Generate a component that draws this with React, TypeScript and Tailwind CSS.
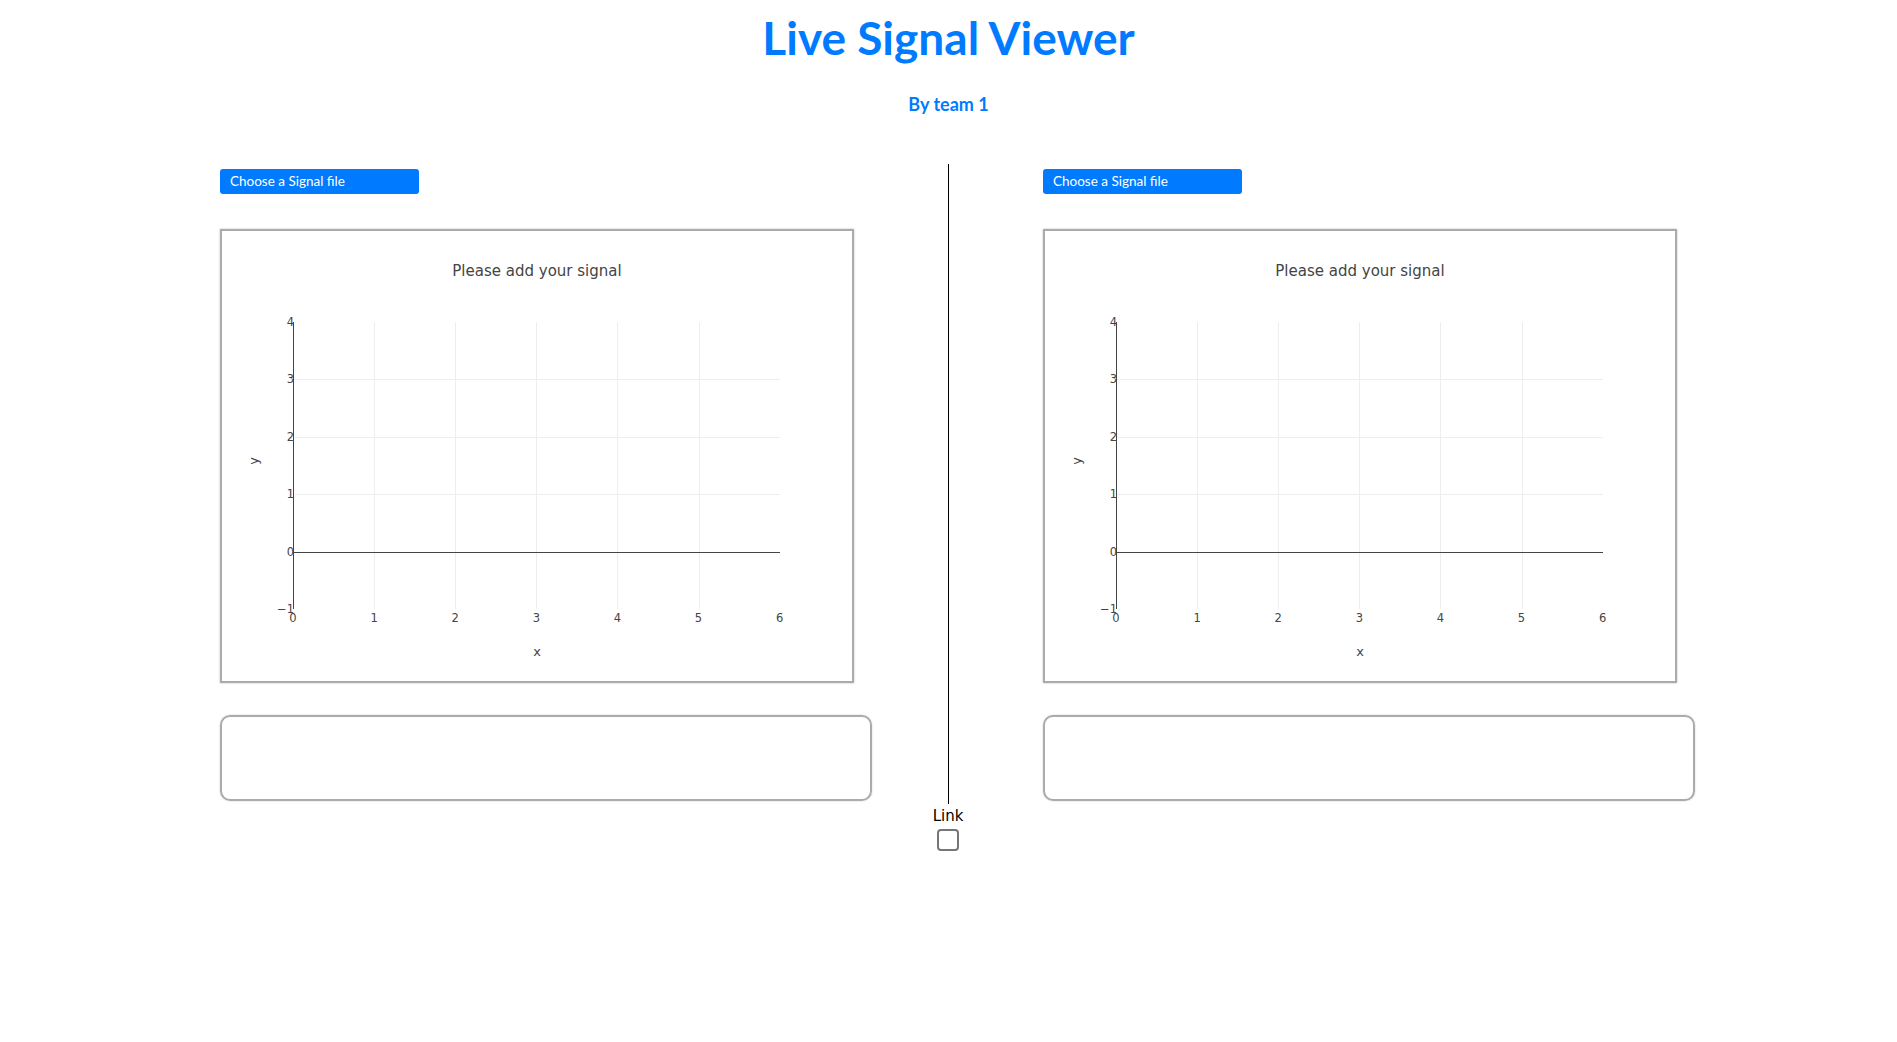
const X_TICKS = [0, 1, 2, 3, 4, 5, 6];
const Y_TICKS = [4, 3, 2, 1, 0, -1];

const xPos = (v: number) => 71 + v * 81.1;
const yPos = (v: number) => 320.5 - v * 57.4;

function EmptyPlot() {
  return (
    <div className="h-[454px] w-[634px] border-2 border-[#ababab] bg-white shadow-[0_0_2px_rgba(0,0,0,0.25)]">
      <svg width="630" height="450" className="block font-['DejaVu_Sans',Verdana,sans-serif]">
        <text x="315" y="45" textAnchor="middle" fontSize="15" fill="#444">
          Please add your signal
        </text>

        {/* grid */}
        {X_TICKS.slice(1, 6).map((t) => (
          <line
            key={`gx${t}`}
            x1={Math.round(xPos(t)) + 0.5}
            x2={Math.round(xPos(t)) + 0.5}
            y1={yPos(4)}
            y2={yPos(-1)}
            stroke="#eee"
            shapeRendering="crispEdges"
          />
        ))}
        {[1, 2, 3].map((t) => (
          <line
            key={`gy${t}`}
            x1={xPos(0)}
            x2={xPos(6)}
            y1={Math.round(yPos(t)) + 0.5}
            y2={Math.round(yPos(t)) + 0.5}
            stroke="#eee"
            shapeRendering="crispEdges"
          />
        ))}

        {/* zero line + y axis */}
        <line x1={xPos(0)} x2={xPos(6)} y1={Math.round(yPos(0)) + 0.5} y2={Math.round(yPos(0)) + 0.5} stroke="#444" shapeRendering="crispEdges" />
        <line x1="71.5" x2="71.5" y1={yPos(4)} y2={yPos(-1)} stroke="#444" shapeRendering="crispEdges" />

        {Y_TICKS.map((t) => (
          <text key={`ty${t}`} x="72" y={yPos(t) + 4} textAnchor="end" fontSize="11.5" fill="#444">
            {t < 0 ? `\u2212${Math.abs(t)}` : t}
          </text>
        ))}
        {X_TICKS.map((t) => (
          <text key={`tx${t}`} x={xPos(t)} y="391" textAnchor="middle" fontSize="11.5" fill="#444">
            {t}
          </text>
        ))}

        <text x="315" y="425" textAnchor="middle" fontSize="13" fill="#444">
          x
        </text>
        <text x="40" y="234" textAnchor="middle" fontSize="13" fill="#444" transform="rotate(-90 36 234)">
          y
        </text>
      </svg>
    </div>
  );
}

function SignalColumn() {
  return (
    <div className="flex w-[653px] flex-col">
      <button className="mt-[5px] h-[25px] w-[199px] rounded-[3px] bg-[#007bff] pl-[10px] text-left font-['Lato',sans-serif] text-[13.5px] leading-[25px] text-white">
        Choose a Signal file
      </button>
      <div className="mt-[35px]">
        <EmptyPlot />
      </div>
      <textarea className="mt-[32px] h-[86px] w-[652px] resize-none rounded-[10px] border-2 border-[#ababab] shadow-[0_0_2px_rgba(0,0,0,0.2)] outline-none" />
    </div>
  );
}

export default function App() {
  return (
    <main className="min-h-screen bg-white">
      <h1 className="mt-[15px] text-center font-['Lato',sans-serif] text-[46px] leading-[46px] font-bold text-[#007bff]">
        Live Signal Viewer
      </h1>
      <p className="mt-[34px] text-center font-['Lato',sans-serif] text-[18px] leading-[18px] font-bold text-[#007bff]">
        By team 1
      </p>

      <div className="mt-[51px] flex pl-[220px]">
        <SignalColumn />
        <div className="ml-[63px] flex w-[24px] flex-col items-center">
          <div className="h-[640px] w-px bg-black" />
          <span className="mt-[2px] font-['DejaVu_Sans',Verdana,sans-serif] text-[15px] leading-[20px] text-black">
            Link
          </span>
          <input
            type="checkbox"
            className="mt-[3px] h-[22px] w-[22px] appearance-none rounded-[4px] border-2 border-[#767676] bg-white"
          />
        </div>
        <div className="ml-[83px]">
          <SignalColumn />
        </div>
      </div>
    </main>
  );
}
